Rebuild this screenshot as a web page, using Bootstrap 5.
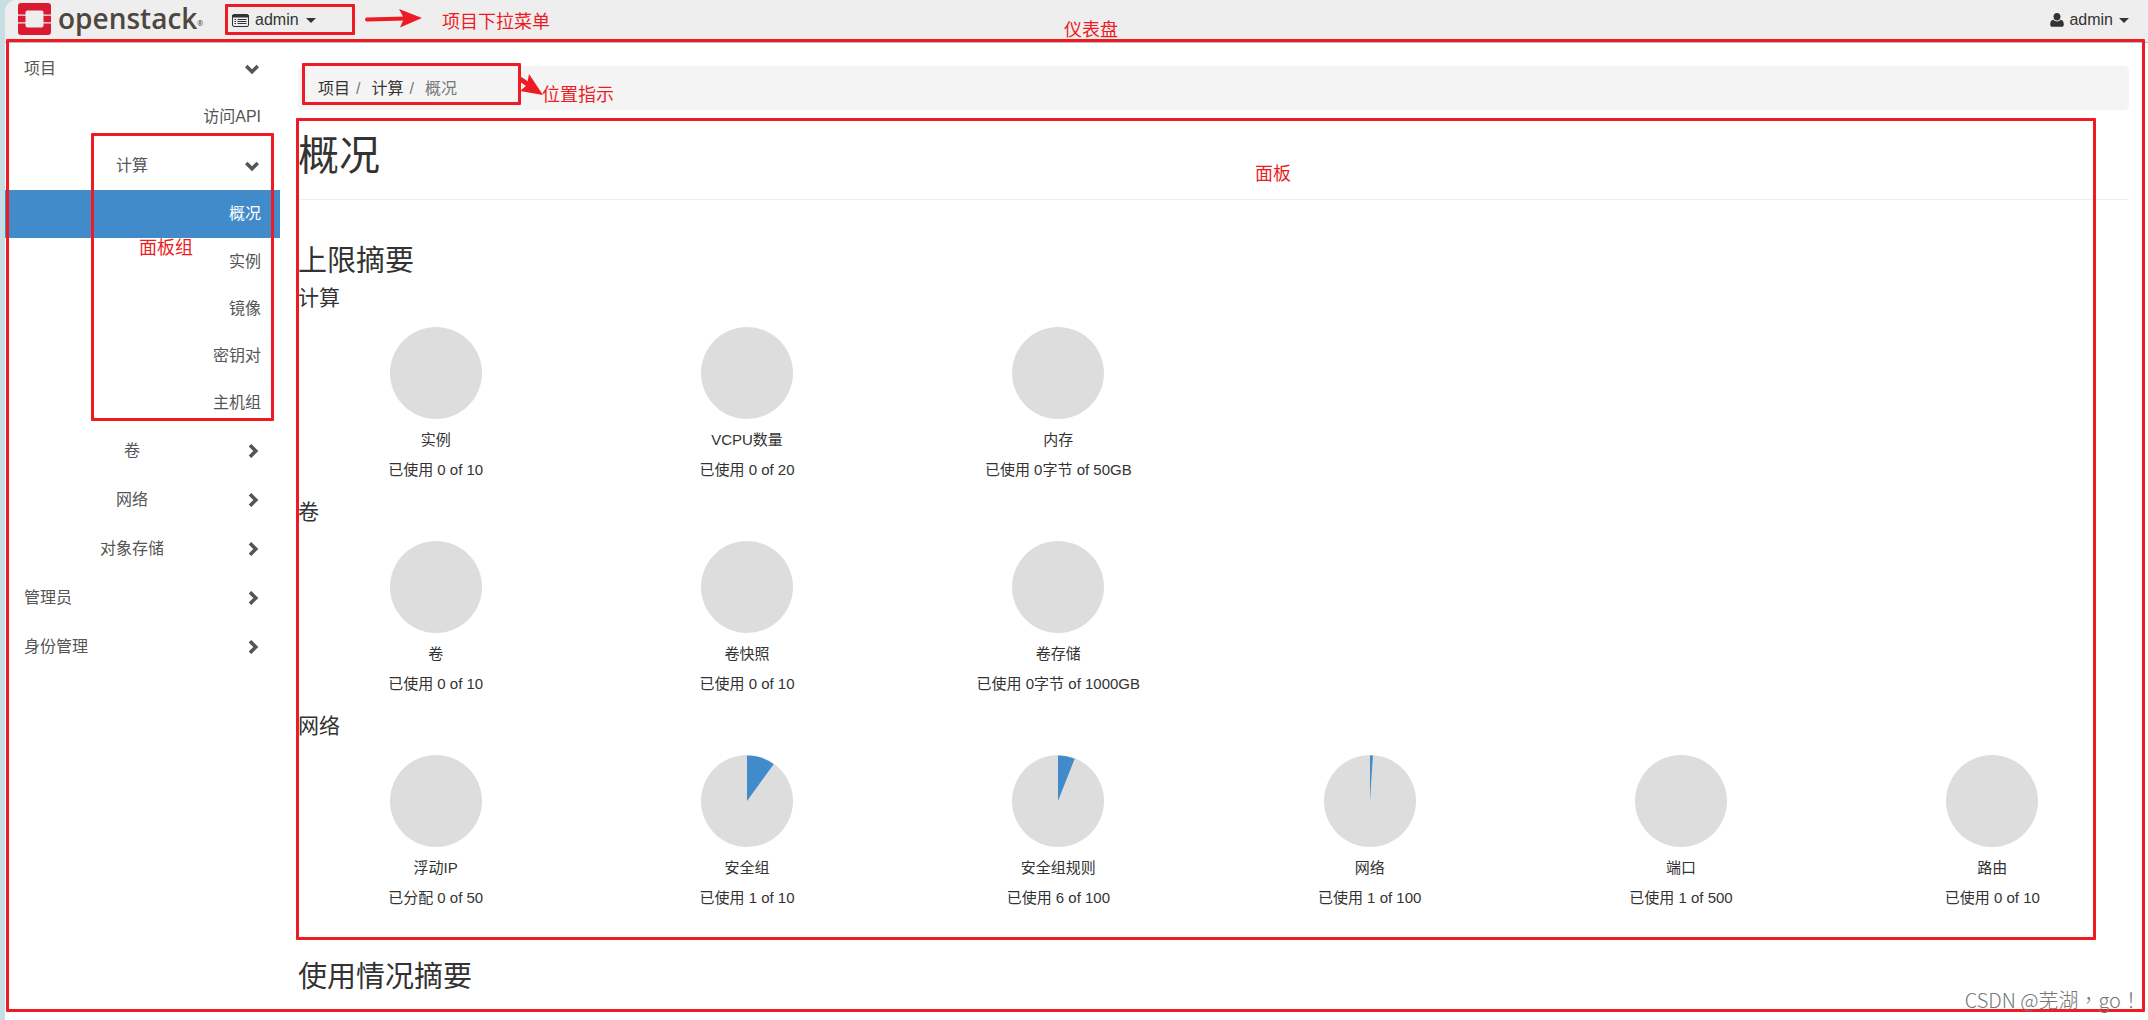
<!DOCTYPE html>
<html lang="zh-CN">
<head>
<meta charset="utf-8">
<meta name="viewport" content="width=device-width, initial-scale=1">
<title>概况 - OpenStack Dashboard</title>
<link href="https://cdn.jsdelivr.net/npm/bootstrap@5.3.0/dist/css/bootstrap.min.css" rel="stylesheet">
<style>
body{font-family:"Liberation Sans","Noto Sans CJK SC",sans-serif;font-size:16px;line-height:24px;color:#333;background:#c7dfe3}
.shell{margin-left:5px;min-height:100vh;background:#fff;border-top-left-radius:12px}
.topbar{height:43px;background:#eee;border-bottom:1px solid #bbb;border-top-left-radius:12px;padding:0 19px 0 13px}
.brand{width:214px;color:#4f463d;font:600 28px/36px "Open Sans",sans-serif}
.brand svg{margin:3px 7px 0 0}
.brand small{font-size:7px;line-height:20px;padding-top:14px}
.menu-btn{border:0;background:none;padding:0;color:#333;line-height:24px;height:24px;gap:6px;margin-top:8px}
.user-btn{gap:5px}
.menu-btn svg:last-child{margin-left:1px}
.side{width:275px;padding-top:1px;flex:none}
.side button{border:0;background:none;width:100%;height:49px;padding:0 21px 0 19px;color:#555;text-align:left}
.side .sub-head{padding-left:14px;text-align:center}
.side a{display:block;height:47px;line-height:47px;padding-right:19px;text-align:right;color:#555;text-decoration:none}
.side a.tall{height:48px}
.side a.active{background:#428bca;color:#fff}
.main{padding:23px 19px 0 18px;min-width:0}
.crumbs{height:44px;padding:2px 20px 0;background:#f4f4f4;border-radius:5px;margin-bottom:21px}
.crumbs a{color:#333;text-decoration:none}
.crumbs .breadcrumb-item+.breadcrumb-item{padding-left:6px}
.crumbs .breadcrumb-item+.breadcrumb-item::before{padding:0 11px 0 0;color:#777}
.crumbs .active{color:#777}
h1{font-size:41px;line-height:50px;margin:0 0 18px;font-weight:400}
h2{font-size:29px;line-height:36px;margin:0;font-weight:400}
h3{font-size:21px;line-height:26px;margin:0 0 16px;font-weight:400}
.rule{border-top:1px solid #eee;margin-bottom:43px}
.quota-section{height:214px;padding-top:6px}
.quota-row{margin:0 -19px 0 -18px}
.quota{text-align:center;font-size:15px;line-height:20px}
.quota svg{display:block;margin:0 auto 11px}
.quota p{margin:0 0 10px}
.usage-title{margin-top:38px}
.note-box,.note-text,.note-arrow{position:absolute;pointer-events:none}
.note-box{border:3px solid #ed1c24;border-radius:1px}
.note-text{color:#ed1c24;font-size:18px;line-height:24px;white-space:nowrap}
.n-dash{left:6px;right:3px;top:39px;height:973px}
.n-menu{left:225px;width:130px;top:4px;height:31px}
.n-crumb{left:302px;width:219px;top:63px;height:42px}
.n-group{left:91px;width:183px;top:133px;height:288px}
.n-panel{left:296px;right:52px;top:118px;height:822px}
.t-menu{left:442px;top:10px}
.t-crumb{left:542px;top:83px}
.t-dash{left:1064px;top:18px}
.t-panel{left:1255px;top:162px}
.t-group{left:139px;top:236px}
.a-menu{left:364px;top:8px}
.a-crumb{left:518px;top:74px}
.watermark{position:absolute;right:7px;top:988px;font:300 20px/24px "Noto Sans CJK TC",sans-serif;color:#777;white-space:nowrap}
</style>
</head>
<body class="position-relative">
<svg class="d-none">
  <symbol id="down" viewBox="0 0 14 14"><path d="M1.200 4 7 9.800 12.800 4" fill="none" stroke="currentColor" stroke-width="3.600"/></symbol>
  <symbol id="right" viewBox="0 0 14 14"><path d="M5 1.200 10.800 7 5 12.800" fill="none" stroke="currentColor" stroke-width="3.600"/></symbol>
  <symbol id="caret" viewBox="0 0 10 5"><path d="M0 0h10L5 5z" fill="currentColor"/></symbol>
</svg>
<div class="shell">
  <header class="topbar d-flex justify-content-between align-items-start">
    <div class="d-flex align-items-start">
      <a class="brand d-flex align-items-start text-decoration-none" href="#">
        <svg width="33" height="32" viewBox="0 0 33 32" aria-hidden="true">
          <path fill="#da1a32" d="M3 0h27a3 3 0 0 1 3 3v8.500h-7.500V9.500A2 2 0 0 0 23.500 7.500H9.500a2 2 0 0 0-2 2v2H0V3a3 3 0 0 1 3-3zM0 20.500h7.500v2a2 2 0 0 0 2 2h14a2 2 0 0 0 2-2v-2H33V29a3 3 0 0 1-3 3H3a3 3 0 0 1-3-3zM0 12.800h7.500v6.400H0zM25.500 12.800H33v6.400h-7.500z"/>
        </svg>
        <span>openstack</span><small>®</small>
      </a>
      <button class="menu-btn d-flex align-items-center" type="button">
        <svg width="17" height="13" viewBox="0 0 17 13" aria-hidden="true"><rect x=".5" y=".5" width="16" height="12" rx="1.500" fill="none" stroke="#333"/><path d="M0 1h17v2.500H0z" fill="#333"/><path d="M2.500 5.500h1.500M5.500 5.500h9M2.500 7.500h1.500M5.500 7.500h9M2.500 9.500h1.500M5.500 9.500h9" stroke="#333"/></svg>
        <span>admin</span>
        <svg width="10" height="5" aria-hidden="true"><use href="#caret"/></svg>
      </button>
    </div>
    <button class="menu-btn user-btn d-flex align-items-center" type="button">
      <svg width="14" height="14" viewBox="0 0 14 14" aria-hidden="true"><path fill="#333" d="M7 0c2.200 0 3.500 1.600 3.500 3.700S9 7.500 7 7.500 3.500 5.800 3.500 3.700 4.800 0 7 0zM3.400 6.800C4.300 7.900 5.500 8.500 7 8.500s2.700-.6 3.600-1.700c2.300.3 3.200 2.300 3.200 4.700 0 1.500-.9 2.300-2.200 2.300H2.400C1.100 13.800.2 13 .2 11.500c0-2.400.9-4.400 3.200-4.700z"/></svg>
      <span>admin</span>
      <svg width="10" height="5" aria-hidden="true"><use href="#caret"/></svg>
    </button>
  </header>
  <div class="d-flex">
    <nav class="side">
      <button class="d-flex align-items-center" type="button"><span class="flex-grow-1">项目</span><svg width="14" height="14"><use href="#down"/></svg></button>
      <a class="tall" href="#">访问API</a>
      <button class="sub-head d-flex align-items-center" type="button"><span class="flex-grow-1">计算</span><svg width="14" height="14"><use href="#down"/></svg></button>
      <a class="tall active" href="#" aria-current="page">概况</a>
      <a href="#">实例</a>
      <a href="#">镜像</a>
      <a href="#">密钥对</a>
      <a href="#">主机组</a>
      <button class="sub-head d-flex align-items-center" type="button"><span class="flex-grow-1">卷</span><svg width="14" height="14"><use href="#right"/></svg></button>
      <button class="sub-head d-flex align-items-center" type="button"><span class="flex-grow-1">网络</span><svg width="14" height="14"><use href="#right"/></svg></button>
      <button class="sub-head d-flex align-items-center" type="button"><span class="flex-grow-1">对象存储</span><svg width="14" height="14"><use href="#right"/></svg></button>
      <button class="d-flex align-items-center" type="button"><span class="flex-grow-1">管理员</span><svg width="14" height="14"><use href="#right"/></svg></button>
      <button class="d-flex align-items-center" type="button"><span class="flex-grow-1">身份管理</span><svg width="14" height="14"><use href="#right"/></svg></button>
    </nav>
    <main class="main flex-grow-1">
      <ol class="breadcrumb crumbs align-items-center">
        <li class="breadcrumb-item"><a href="#">项目</a></li>
        <li class="breadcrumb-item"><a href="#">计算</a></li>
        <li class="breadcrumb-item active" aria-current="page">概况</li>
      </ol>
      <h1>概况</h1>
      <div class="rule"></div>
      <h2>上限摘要</h2>
      <section class="quota-section">
        <h3>计算</h3>
        <div class="row g-0 quota-row">
          <div class="col-2 quota"><svg width="92" height="92" viewBox="0 0 92 92"><circle cx="46" cy="46" r="46" fill="#ddd"/></svg><p>实例</p><p>已使用 0 of 10</p></div>
          <div class="col-2 quota"><svg width="92" height="92" viewBox="0 0 92 92"><circle cx="46" cy="46" r="46" fill="#ddd"/></svg><p>VCPU数量</p><p>已使用 0 of 20</p></div>
          <div class="col-2 quota"><svg width="92" height="92" viewBox="0 0 92 92"><circle cx="46" cy="46" r="46" fill="#ddd"/></svg><p>内存</p><p>已使用 0字节 of 50GB</p></div>
        </div>
      </section>
      <section class="quota-section">
        <h3>卷</h3>
        <div class="row g-0 quota-row">
          <div class="col-2 quota"><svg width="92" height="92" viewBox="0 0 92 92"><circle cx="46" cy="46" r="46" fill="#ddd"/></svg><p>卷</p><p>已使用 0 of 10</p></div>
          <div class="col-2 quota"><svg width="92" height="92" viewBox="0 0 92 92"><circle cx="46" cy="46" r="46" fill="#ddd"/></svg><p>卷快照</p><p>已使用 0 of 10</p></div>
          <div class="col-2 quota"><svg width="92" height="92" viewBox="0 0 92 92"><circle cx="46" cy="46" r="46" fill="#ddd"/></svg><p>卷存储</p><p>已使用 0字节 of 1000GB</p></div>
        </div>
      </section>
      <section class="quota-section">
        <h3>网络</h3>
        <div class="row g-0 quota-row">
          <div class="col-2 quota"><svg width="92" height="92" viewBox="0 0 92 92"><circle cx="46" cy="46" r="46" fill="#ddd"/></svg><p>浮动IP</p><p>已分配 0 of 50</p></div>
          <div class="col-2 quota"><svg width="92" height="92" viewBox="0 0 92 92"><circle cx="46" cy="46" r="46" fill="#ddd"/><path fill="#428bca" d="M46 46V.5A45.500 45.500 0 0 1 72.700 9.200z"/></svg><p>安全组</p><p>已使用 1 of 10</p></div>
          <div class="col-2 quota"><svg width="92" height="92" viewBox="0 0 92 92"><circle cx="46" cy="46" r="46" fill="#ddd"/><path fill="#428bca" d="M46 46V.5A45.500 45.500 0 0 1 62.700 3.700z"/></svg><p>安全组规则</p><p>已使用 6 of 100</p></div>
          <div class="col-2 quota"><svg width="92" height="92" viewBox="0 0 92 92"><circle cx="46" cy="46" r="46" fill="#ddd"/><path fill="#428bca" d="M46 46V.5A45.500 45.500 0 0 1 48.900.6z"/></svg><p>网络</p><p>已使用 1 of 100</p></div>
          <div class="col-2 quota"><svg width="92" height="92" viewBox="0 0 92 92"><circle cx="46" cy="46" r="46" fill="#ddd"/></svg><p>端口</p><p>已使用 1 of 500</p></div>
          <div class="col-2 quota"><svg width="92" height="92" viewBox="0 0 92 92"><circle cx="46" cy="46" r="46" fill="#ddd"/></svg><p>路由</p><p>已使用 0 of 10</p></div>
        </div>
      </section>
      <h2 class="usage-title">使用情况摘要</h2>
    </main>
  </div>
</div>

<div class="note-box n-dash"></div>
<div class="note-box n-menu"></div>
<div class="note-box n-crumb"></div>
<div class="note-box n-group"></div>
<div class="note-box n-panel"></div>
<svg class="note-arrow a-menu" width="60" height="22" viewBox="0 0 60 22"><path d="M3 11.500 42 10.500" stroke="#ed1c24" stroke-width="4" stroke-linecap="round"/><path d="M35 1 58 10 36 19.500 40 10.500z" fill="#ed1c24"/></svg>
<svg class="note-arrow a-crumb" width="26" height="24" viewBox="0 0 26 24"><path d="M2 5 14 13" stroke="#ed1c24" stroke-width="5"/><path d="M11 0 25 21 2 17 9 11z" fill="#ed1c24"/></svg>
<div class="note-text t-menu">项目下拉菜单</div>
<div class="note-text t-crumb">位置指示</div>
<div class="note-text t-dash">仪表盘</div>
<div class="note-text t-panel">面板</div>
<div class="note-text t-group">面板组</div>
<div class="watermark" lang="zh-TW">CSDN @芜湖，go！</div>
<script src="https://cdn.jsdelivr.net/npm/bootstrap@5.3.0/dist/js/bootstrap.bundle.min.js"></script>
</body>
</html>
